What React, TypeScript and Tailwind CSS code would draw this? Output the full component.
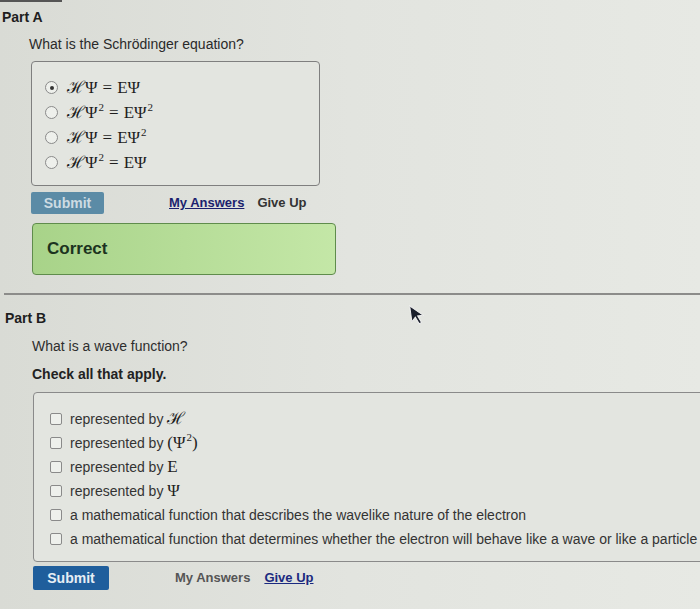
import React from "react";

const sans = { fontFamily: '"Liberation Sans", Arial, sans-serif' };

function M({ children }: { children: React.ReactNode }) {
  return (
    <span className="text-[17px] text-[#1e1e1e]" style={{ fontFamily: '"Liberation Serif", "DejaVu Serif", serif' }}>
      {children}
    </span>
  );
}

function Sup({ children }: { children: React.ReactNode }) {
  return <sup className="text-[11px] relative -top-[7px] ml-[1px]">{children}</sup>;
}

function Eq() {
  return <span className="mx-[5px]">=</span>;
}

function Radio({ checked }: { checked?: boolean }) {
  return (
    <span className="w-[13px] h-[13px] rounded-full border border-[#8a8a8a] bg-[#eef0ec] flex items-center justify-center shrink-0">
      {checked && <span className="w-[4px] h-[4px] rounded-full bg-[#333]" />}
    </span>
  );
}

function Check() {
  return <span className="w-[12px] h-[12px] rounded-[2px] border border-[#8a8a8a] bg-[#eef0ec] shrink-0" />;
}

export default function App() {
  const radios: React.ReactNode[] = [
    <>ℋΨ<Eq />EΨ</>,
    <>ℋΨ<Sup>2</Sup><Eq />EΨ<Sup>2</Sup></>,
    <>ℋΨ<Eq />EΨ<Sup>2</Sup></>,
    <>ℋΨ<Sup>2</Sup><Eq />EΨ</>,
  ];
  const checks: React.ReactNode[] = [
    <>represented by <M>ℋ</M></>,
    <>represented by <M>(Ψ<Sup>2</Sup>)</M></>,
    <>represented by <M>E</M></>,
    <>represented by <M>Ψ</M></>,
    <>a mathematical function that describes the wavelike nature of the electron</>,
    <>a mathematical function that determines whether the electron will behave like a wave or like a particle</>,
  ];
  return (
    <div
      className="relative w-[700px] h-[609px] overflow-hidden bg-gradient-to-r from-[#d9dbd5] via-[#e2e4df] to-[#e7e9e4] text-[#2a2a2a]"
      style={sans}
    >
      <div className="h-[2px] w-[62px] bg-[#555]" />
      <div className="mt-[7px] pl-[2px] text-[14px] leading-[16px] font-bold text-[#1e1e1e]">Part A</div>
      <div className="mt-[11px] pl-[29px] text-[14px] leading-[16px] text-[#2a2a2a]">What is the Schrödinger equation?</div>
      <div className="mt-[9px] ml-[31px] w-[289px] h-[125px] border border-[#7f7f7f] rounded-[4px] bg-[#e3e5e0] pt-[13px] pl-[13px]">
        {radios.map((r, i) => (
          <div key={i} className="h-[25px] flex items-center gap-[9px]">
            <Radio checked={i === 0} />
            <M>{r}</M>
          </div>
        ))}
      </div>
      <div className="mt-[6px] ml-[31px] flex items-center">
        <div className="w-[73px] h-[22px] rounded-[2px] bg-[#5b8ba6] text-[#cddbe3] font-bold text-[14px] flex items-center justify-center">
          Submit
        </div>
        <span className="ml-[65px] text-[13px] font-bold text-[#1b1f6e] underline">My Answers</span>
        <span className="ml-[13px] text-[13px] font-bold text-[#333]">Give Up</span>
      </div>
      <div className="mt-[9px] ml-[32px] w-[304px] h-[52px] rounded-[4px] border border-[#5f8c4c] bg-gradient-to-r from-[#a8d389] to-[#c4e7a7] flex items-center pl-[14px]">
        <span className="text-[17px] font-bold text-[#1c3320]">Correct</span>
      </div>
      <div className="mt-[18px] ml-[4px] h-[2px] bg-[#8c8c8a]" />
      <div className="mt-[15px] pl-[5px] text-[14px] leading-[16px] font-bold text-[#1e1e1e]">Part B</div>
      <div className="mt-[12px] pl-[32px] text-[14px] leading-[16px] text-[#2e2e2e]">What is a wave function?</div>
      <div className="mt-[12px] pl-[32px] text-[14px] leading-[16px] font-bold text-[#222]">Check all that apply.</div>
      <div className="mt-[10px] ml-[33px] w-[700px] h-[170px] border border-[#8a8a8a] rounded-[4px] bg-[#e3e5e0] pt-[14px] pl-[16px]">
        {checks.map((c, i) => (
          <div key={i} className="h-[24px] flex items-center gap-[8px] text-[14px] text-[#333] whitespace-nowrap">
            <Check />
            <span>{c}</span>
          </div>
        ))}
      </div>
      <div className="mt-[4px] ml-[33px] flex items-center">
        <div className="w-[76px] h-[24px] rounded-[2px] bg-[#1f5e9c] text-[#e6eef5] font-bold text-[14px] flex items-center justify-center">
          Submit
        </div>
        <span className="ml-[66px] text-[13px] font-bold text-[#555]">My Answers</span>
        <span className="ml-[14px] text-[13px] font-bold text-[#1b2a80] underline">Give Up</span>
      </div>
      <svg className="absolute left-[409px] top-[304px]" width="16" height="22" viewBox="0 0 16 22">
        <path d="M2 1 L2 17 L6 13 L9 20 L11.5 19 L8.5 12 L14 12 Z" fill="#1a1f2c" stroke="#f0f0f0" strokeWidth="1" transform="rotate(-8 8 11)" />
      </svg>
    </div>
  );
}
